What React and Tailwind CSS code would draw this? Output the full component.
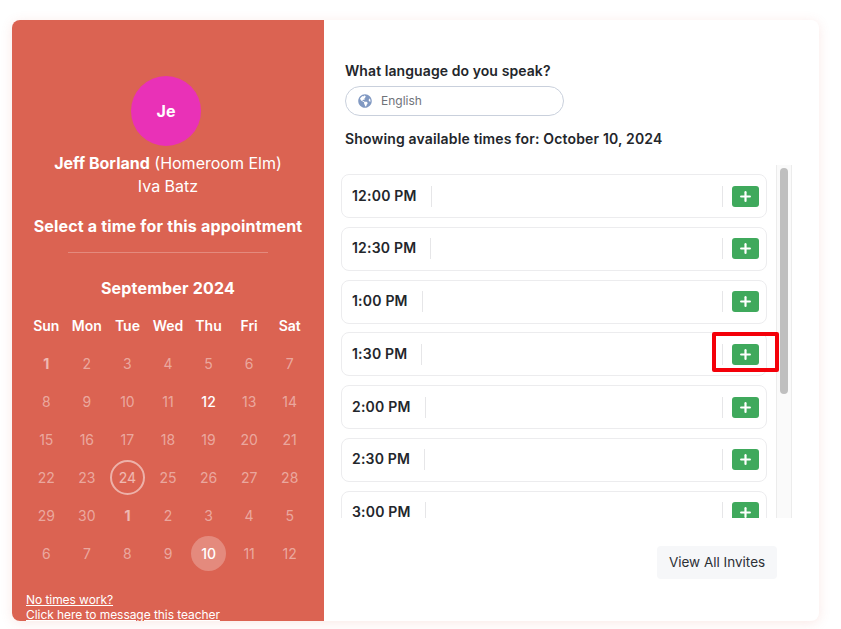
import React from 'react';
import { FaGlobeAmericas } from 'react-icons/fa';
import { Plus } from 'lucide-react';

const weekDays = ['Sun', 'Mon', 'Tue', 'Wed', 'Thu', 'Fri', 'Sat'];

// Calendar rows, 1st of a month is drawn a bit heavier
const weeks = [
  [1, 2, 3, 4, 5, 6, 7],
  [8, 9, 10, 11, 12, 13, 14],
  [15, 16, 17, 18, 19, 20, 21],
  [22, 23, 24, 25, 26, 27, 28],
  [29, 30, 1, 2, 3, 4, 5],
  [6, 7, 8, 9, 10, 11, 12],
];

const times = ['12:00 PM', '12:30 PM', '1:00 PM', '1:30 PM', '2:00 PM', '2:30 PM', '3:00 PM'];

const DayCell = ({ day, row, col }) => {
  const isFirst = day === 1;
  const isToday = row === 3 && col === 2;
  const isSelected = row === 5 && col === 4;
  const isAvailable = row === 1 && col === 4;

  let tone = 'text-white/45';
  if (isFirst) tone = 'text-white/55 font-bold';
  if (isToday) tone = 'text-white/55 border-2 border-white/50';
  if (isAvailable) tone = 'text-white font-medium';
  if (isSelected) tone = 'text-white font-medium bg-white/25';

  return (
    <div className="flex h-[38px] items-center justify-center">
      <span className={`flex h-[35px] w-[35px] items-center justify-center rounded-full text-[14px] ${tone}`}>
        {day}
      </span>
    </div>
  );
};

const TimeRow = ({ time, highlighted }) => (
  <div className="relative flex h-[44px] shrink-0 items-center rounded-lg border border-[#ececee] bg-white pl-[10px] pr-[7px]">
    <span className="-mt-[2px] text-[14px] font-semibold tracking-[0.2px] text-[#23262b]">{time}</span>
    <span className="ml-[14px] h-[21px] w-px bg-[#e6e6e8]" />
    <span className="ml-auto h-[21px] w-px bg-[#e6e6e8]" />
    <button className="ml-[9px] flex h-[21px] w-[27px] items-center justify-center rounded-[3px] bg-[#3fa95c]">
      <Plus size={15} strokeWidth={3.5} className="text-white" />
    </button>
    {highlighted && (
      <div className="absolute left-[370px] top-[-1px] h-[40px] w-[67px] rounded-[2px] border-4 border-[#f40009]" />
    )}
  </div>
);

export default function App() {
  return (
    <div className="h-[629px] w-[841px] overflow-hidden bg-white pl-[12px] pt-[20px] font-['Inter',sans-serif]">
      <div className="flex h-[601px] w-[807px] overflow-hidden rounded-lg bg-white shadow-[0_2px_12px_rgba(220,100,85,0.15)]">
        {/* Left panel */}
        <div className="flex h-full w-[312px] shrink-0 flex-col items-center overflow-hidden bg-[#db6352] pt-[56px] text-white">
          <div className="mr-[4px] flex h-[70px] w-[70px] shrink-0 items-center justify-center rounded-full bg-[#e931b7] text-[16px] font-bold">
            Je
          </div>
          <div className="mt-[5px] text-[16px] leading-[24px]">
            <span className="font-bold">Jeff Borland</span> (Homeroom Elm)
          </div>
          <div className="text-[16px] leading-[22px]">Iva Batz</div>
          <div className="mt-[17px] text-[16px] font-bold leading-[24px] tracking-[0.18px]">
            Select a time for this appointment
          </div>
          <div className="mt-[14px] h-px w-[200px] shrink-0 bg-white/25" />
          <div className="mt-[23px] text-[16px] font-bold leading-[24px] tracking-[0.2px]">September 2024</div>

          <div className="mt-[13px] grid w-[284px] shrink-0 grid-cols-7">
            {weekDays.map((d) => (
              <div key={d} className="flex h-[24px] items-center justify-center text-[14px] font-semibold">
                {d}
              </div>
            ))}
          </div>
          <div className="mt-[7px] grid w-[284px] shrink-0 grid-cols-7">
            {weeks.map((week, row) =>
              week.map((day, col) => <DayCell key={`${row}-${col}`} day={day} row={row} col={col} />)
            )}
          </div>

          <div className="mt-[20px] w-full shrink-0 pl-[14px] text-[12px] leading-[15px] tracking-[-0.06px] underline">
            <div>No times work?</div>
            <div>Click here to message this teacher</div>
          </div>
        </div>

        {/* Right panel */}
        <div className="flex min-w-0 flex-1 flex-col pl-[17px]">
          <div className="mt-[42px] pl-[4px] text-[14px] font-semibold leading-[18px] tracking-[0.08px] text-[#23262b]">
            What language do you speak?
          </div>
          <div className="ml-[4px] mt-[6px] flex h-[30px] w-[219px] items-center rounded-full border border-[#c9d0dc] pl-[12px]">
            <FaGlobeAmericas size={14} className="text-[#8199c2]" />
            <span className="ml-[9px] text-[12px] text-[#6f7379]">English</span>
          </div>
          <div className="mt-[14px] pl-[4px] text-[14px] font-semibold leading-[18px] tracking-[0.16px] text-[#23262b]">
            Showing available times for: October 10, 2024
          </div>

          <div className="mt-[17px] flex h-[353px] overflow-hidden">
            <div className="flex w-[426px] flex-col gap-[8.8px] pt-[9px]">
              {times.map((t, i) => (
                <TimeRow key={t} time={t} highlighted={i === 3} />
              ))}
            </div>
            <div className="ml-[9px] h-full w-[16px] border-x border-[#ececec] bg-[#fafafa] px-[3px] pt-[3px]">
              <div className="h-[226px] w-full rounded-full bg-[#bfbfbf]" />
            </div>
          </div>

          <div className="mt-[28px] pl-[316px]">
            <button className="h-[33px] w-[120px] rounded-[4px] bg-[#f6f7f9] text-[13.5px] text-[#2d3036]">
              View All Invites
            </button>
          </div>
        </div>
      </div>
    </div>
  );
}
